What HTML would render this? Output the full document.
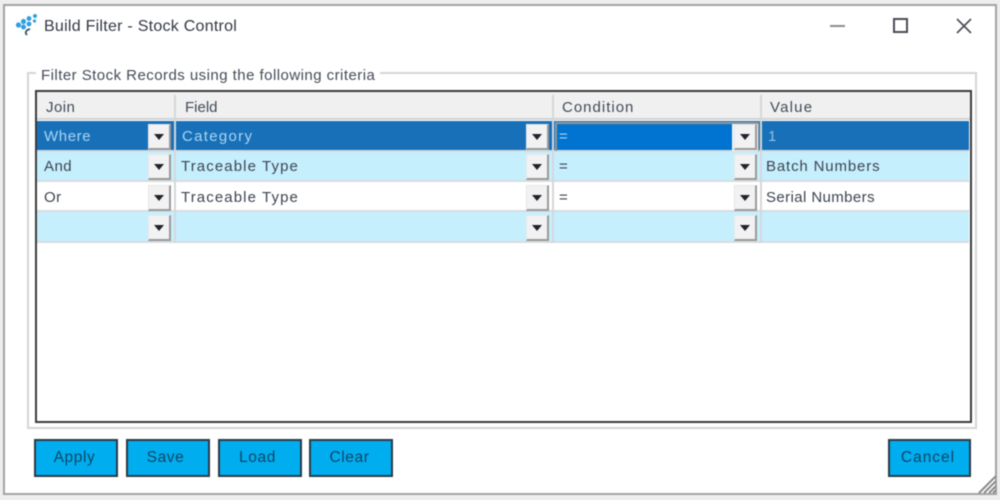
<!DOCTYPE html>
<html><head><meta charset="utf-8"><style>
html,body{margin:0;padding:0;width:1000px;height:500px;overflow:hidden;background:#eeeeee}
#w{position:relative;width:1000px;height:500px;filter:blur(.6px);font-family:"Liberation Sans",sans-serif;color:#3c4450}
#w div{position:absolute;box-sizing:border-box}
.t{font-size:15px;line-height:18px;white-space:nowrap;letter-spacing:.45px}
.r{height:30px}
.s{background:#d4d8da;width:2px}
.d{width:23px;height:26px;background:#f2f2f2;border-right:2px solid #999;border-bottom:2px solid #999;border-top:1px solid #e8e8e8;border-left:1px solid #e8e8e8}
.d:after{content:"";position:absolute;left:5px;top:9px;border:5.5px solid transparent;border-top:6px solid #20242c;border-bottom:0}
.b{height:38px;top:439px;width:84px;background:#00adef;border:2px solid #2b3b46;text-align:center;font-size:15.5px;line-height:33px;color:#0f4666;letter-spacing:.6px;padding-right:3px}
.h{top:98.5px;color:#424a58}
</style></head><body><div id="w">
<div style="left:3px;top:4px;width:994px;height:491px;background:#fff;border:2px solid #a4a4a4"></div>
<svg style="position:absolute;left:14px;top:12px" width="26" height="25" viewBox="0 0 26 25">
<g fill="#2f9fe0"><circle cx="4.5" cy="13" r="2.6"/><circle cx="9.5" cy="9.5" r="2.6"/><circle cx="15" cy="6.5" r="2.4"/><circle cx="21" cy="4" r="2"/><circle cx="9.5" cy="15" r="2.5"/><circle cx="15" cy="12" r="2.4"/><circle cx="20.5" cy="9" r="1.6"/></g>
<path d="M13 23c-2.5-2.5-1-5 3-6" fill="none" stroke="#33506e" stroke-width="1.8"/></svg>
<div style="left:44px;top:17px;font-size:16px;line-height:20px;color:#333843;white-space:nowrap;letter-spacing:.26px">Build Filter - Stock Control</div>
<div style="left:830px;top:25px;width:15px;height:2px;background:#8a8c92"></div>
<div style="left:893px;top:18px;width:15px;height:15px;border:2px solid #4a4c56"></div>
<svg style="position:absolute;left:955px;top:17px" width="18" height="18" viewBox="0 0 18 18"><path d="M2 2L16 16M16 2L2 16" stroke="#4a4c56" stroke-width="1.6"/></svg>

<div style="left:27px;top:72px;width:950px;height:357px;border:2px solid #d6d6d6"></div>
<div style="left:36px;top:68px;padding:0 5px;background:#fff;font-size:15px;line-height:16px;letter-spacing:.46px;color:#444b58;white-space:nowrap">Filter Stock Records using the following criteria</div>

<div style="left:35px;top:90px;width:937px;height:333px;background:#fff;border:2px solid #3c3c3c"></div>
<div style="left:37px;top:92px;width:933px;height:28px;background:#f0f0f0;border-bottom:2px solid #d2d2d2"></div>
<div class="r" style="top:121px;background:#1870b8;left:37px;width:932px"></div>
<div class="r" style="top:151px;background:#c6effe;left:37px;width:932px"></div>
<div class="r" style="top:181px;background:#fff;left:37px;width:932px"></div>
<div class="r" style="top:211px;background:#c6effe;left:37px;width:932px;height:31px"></div>
<div style="left:37px;top:150px;width:932px;height:2px;background:#d4dde0"></div>
<div style="left:37px;top:180px;width:932px;height:2px;background:#d8dcdd"></div>
<div style="left:37px;top:210px;width:932px;height:2px;background:#d8dcdd"></div>
<div style="left:37px;top:241px;width:932px;height:2px;background:#d8dcdd"></div>
<div class="s" style="left:174px;top:95px;height:148px"></div>
<div class="s" style="left:552px;top:95px;height:148px"></div>
<div class="s" style="left:760px;top:95px;height:148px"></div>

<div style="left:555px;top:122px;width:204px;height:29px;border:2px solid #8e979d;border-bottom:0"></div>
<div style="left:558px;top:125px;width:174px;height:25px;background:#0074d0"></div>
<div style="left:732px;top:124px;width:26px;height:27px;background:#f2f2f2"></div>

<div class="t h" style="left:46px">Join</div>
<div class="t h" style="left:185px;letter-spacing:0">Field</div>
<div class="t h" style="left:562px;letter-spacing:1px">Condition</div>
<div class="t h" style="left:770px;letter-spacing:1.2px">Value</div>

<div class="t" style="left:44px;top:128px;color:#a9d6f2;letter-spacing:.6px">Where</div>
<div class="t" style="left:182px;top:128px;color:#a9d6f2;letter-spacing:1.3px">Category</div>
<div class="t" style="left:559px;top:128px;color:#a9d6f2">=</div>
<div class="t" style="left:768px;top:128px;color:#8fc0e2">1</div>

<div class="t" style="left:44px;top:158px">And</div>
<div class="t" style="left:181px;top:158px;letter-spacing:1.1px">Traceable Type</div>
<div class="t" style="left:559px;top:158px">=</div>
<div class="t" style="left:766px;top:158px;letter-spacing:.85px">Batch Numbers</div>

<div class="t" style="left:44px;top:189px">Or</div>
<div class="t" style="left:181px;top:189px;letter-spacing:1.1px">Traceable Type</div>
<div class="t" style="left:559px;top:189px">=</div>
<div class="t" style="left:766px;top:189px;letter-spacing:.4px">Serial Numbers</div>

<div class="d" style="left:148px;top:124px"></div><div class="d" style="left:526px;top:124px"></div><div class="d" style="left:734px;top:124px"></div>
<div class="d" style="left:148px;top:154px"></div><div class="d" style="left:526px;top:154px"></div><div class="d" style="left:734px;top:154px"></div>
<div class="d" style="left:148px;top:185px"></div><div class="d" style="left:526px;top:185px"></div><div class="d" style="left:734px;top:185px"></div>
<div class="d" style="left:148px;top:215px"></div><div class="d" style="left:526px;top:215px"></div><div class="d" style="left:734px;top:215px"></div>

<div class="b" style="left:34px">Apply</div>
<div class="b" style="left:126px;padding-right:5px">Save</div>
<div class="b" style="left:218px;padding-right:5px">Load</div>
<div class="b" style="left:309px">Clear</div>
<div class="b" style="left:888px;width:83px;letter-spacing:1px">Cancel</div>

<svg style="position:absolute;left:976px;top:472px" width="20" height="22" viewBox="0 0 20 22"><path d="M3 21L20 4M8 21L20 9M13 21L20 14M17 21L20 18" stroke="#8a8a8a" stroke-width="2"/></svg>
</div></body></html>
